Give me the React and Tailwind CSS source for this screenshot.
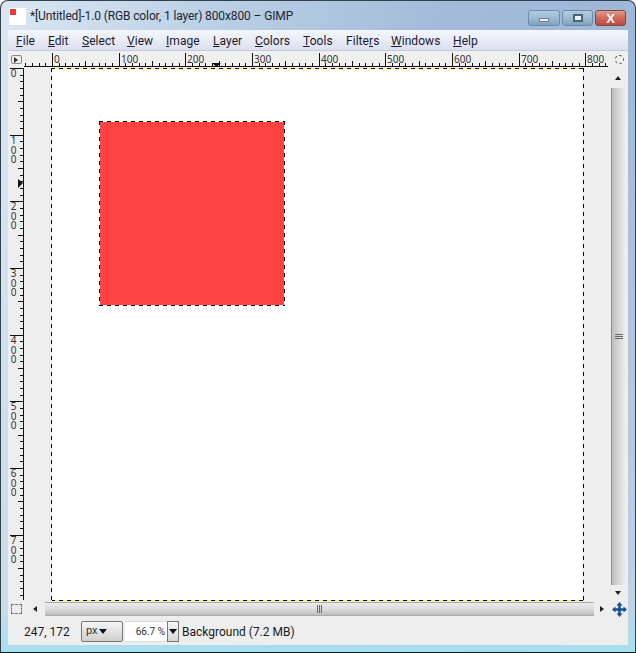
const F = { fontFamily: 'Roboto, "Open Sans", sans-serif' };

function U({ children }) {
  return <span className="underline underline-offset-[1px] decoration-[1px]">{children}</span>;
}

function HRuler() {
  const ticks = [];
  for (let i = -4; i <= 83; i++) {
    const x = Math.round(28 + i * 6.667) + 0.5;
    const h = i % 10 === 0 ? 13 : i % 5 === 0 ? 5 : 3;
    ticks.push(<line key={i} x1={x} x2={x} y1={15 - h} y2={15} stroke="#111" />);
  }
  return (
    <svg width="584" height="17" className="block">
      <rect x="0" y="15" width="584" height="1" fill="#111" />
      {ticks}
      {[0, 100, 200, 300, 400, 500, 600, 700, 800].map((n, i) => (
        <text key={n} x={Math.round(28 + i * 66.67) + 2} y="12" fontSize="10" fill="#333" fontFamily="Noto Sans">{n}</text>
      ))}
      <polygon points="188,12 197,12 192.5,16" fill="#111" />
    </svg>
  );
}

function VRuler() {
  const ticks = [];
  for (let i = 0; i <= 79; i++) {
    const y = Math.round(i * 6.667) + 0.5;
    const h = i % 10 === 0 ? 13 : i % 5 === 0 ? 5 : 3;
    ticks.push(<line key={i} x1={15 - h} x2={15} y1={y} y2={y} stroke="#111" />);
  }
  return (
    <svg width="16" height="532" className="block">
      <rect x="15" y="0" width="1" height="532" fill="#111" />
      {ticks}
      {[0, 100, 200, 300, 400, 500, 600, 700].map((n, i) => {
        const y0 = Math.round(i * 66.67);
        return String(n).split("").map((d, j) => (
          <text key={n + "-" + j} x="5.5" y={y0 + 9 + j * 9.5} textAnchor="middle" fontSize="10" fill="#333" fontFamily="Noto Sans">{d}</text>
        ));
      })}
      <polygon points="10,111 15,115 10,120" fill="#111" />
    </svg>
  );
}

function AntsOverlay({ guide }) {
  const h = guide
    ? "bg-[repeating-linear-gradient(90deg,#000_0_4px,#ffff30_4px_8px)]"
    : "bg-[repeating-linear-gradient(90deg,#000_0_4px,#fff_4px_8px)]";
  const v = guide
    ? "bg-[repeating-linear-gradient(180deg,#000_0_4px,#ffff30_4px_8px)]"
    : "bg-[repeating-linear-gradient(180deg,#000_0_4px,#fff_4px_8px)]";
  return (
    <>
      <div className={"absolute left-0 right-0 top-0 h-px " + h} />
      <div className={"absolute left-0 right-0 bottom-0 h-px " + h} />
      <div className={"absolute left-0 top-0 bottom-0 w-px " + v} />
      <div className={"absolute right-0 top-0 bottom-0 w-px " + v} />
    </>
  );
}

function WinBtn({ w, cls, children }) {
  return (
    <div className={"h-[16px] mt-[9px] flex items-center justify-center rounded-[3px] border " + w + " " + cls}>
      {children}
    </div>
  );
}

function Nav() {
  return (
    <svg width="15" height="15" viewBox="0 0 15 15" className="block">
      <path d="M7.5 0 L10.5 3.5 H8.8 V6.2 H11.5 V4.5 L15 7.5 L11.5 10.5 V8.8 H8.8 V11.5 H10.5 L7.5 15 L4.5 11.5 H6.2 V8.8 H3.5 V10.5 L0 7.5 L3.5 4.5 V6.2 H6.2 V3.5 H4.5 Z" fill="#1c4f94" />
    </svg>
  );
}

function Grip({ vertical }) {
  return (
    <div className={"flex gap-px " + (vertical ? "flex-col" : "flex-row")}>
      {[0, 1, 2].map((i) => (
        <div key={i} className={(vertical ? "w-[8px] h-px" : "h-[8px] w-px") + " bg-[#666]"} />
      ))}
    </div>
  );
}

export default function App() {
  const menu = [
    ["F", "ile", 16], ["E", "dit", 48], ["S", "elect", 82], ["V", "iew", 127], ["I", "mage", 166], ["L", "ayer", 213], ["C", "olors", 255],
    ["T", "ools", 303], ["Filte", "rs", 346, true], ["W", "indows", 391], ["H", "elp", 453],
  ];
  return (
    <div style={F} className="w-[636px] h-[653px] flex flex-col overflow-hidden rounded-t-[8px] border border-[#33424a] border-b-[#0b1c22] bg-[linear-gradient(180deg,transparent_93%,#a8e0ee_100%),linear-gradient(100deg,#dbe7f2_0%,#b9cfe5_30%,#a3bbd9_60%,#9fb8d8_85%,#c1d6e8_100%)] text-[#111]">
      <div className="h-[29px] shrink-0 flex items-center pl-[8px] pr-[9px]">
        <div className="w-[17px] h-[17px] bg-white relative mr-[4px] mt-px">
          <div className="absolute left-[1px] top-[1px] w-[6px] h-[6px] bg-[#f03535]" />
        </div>
        <span className="text-[12px] tracking-[-0.12px] pt-[1px] text-[#1c2530] whitespace-nowrap">*[Untitled]-1.0 (RGB color, 1 layer) 800x800 – GIMP</span>
        <div className="ml-auto flex gap-[2px] self-start">
          <WinBtn w="w-[32px]" cls="border-[#6f8ba3] bg-[linear-gradient(#b4cbe0,#9dbbd3_50%,#7fa3bd)]">
            <div className="w-[10px] h-[4px] bg-[#eef3f7] border border-[#6c7f90] mt-[4px]" />
          </WinBtn>
          <WinBtn w="w-[31px]" cls="border-[#6f8ba3] bg-[linear-gradient(#b4cbe0,#9dbbd3_50%,#7fa3bd)]">
            <div className="w-[10px] h-[8px] bg-[#eef3f7] border-2 border-[#4f6272]" />
          </WinBtn>
          <WinBtn w="w-[31px]" cls="border-[#84473f] bg-[linear-gradient(#dd9d90,#cf6a5c_50%,#bc4a3e)]">
            <span className="text-[13px] leading-none font-bold text-white" style={{ fontFamily: '"Liberation Sans", sans-serif' }}>X</span>
          </WinBtn>
        </div>
      </div>

      <div className="flex-1 min-h-0 mx-[7px] mb-[7px] flex flex-col bg-[#eeeeee]">
        <div className="h-[21px] shrink-0 flex items-center pt-[2px] text-[12px] tracking-[0.05px] bg-[linear-gradient(#f4f6fc,#eceef8_40%,#dcdfef)] border-b border-[#c6cad8]">
          {menu.map(([a, b, x, rev], idx) => {
            const next = idx < menu.length - 1 ? menu[idx + 1][2] : 479;
            return (
              <span key={a} className="whitespace-nowrap text-[#1b1b2b] first:ml-[8px]" style={{ width: next - x }}>
                {rev ? <>{a}<U>{b[0]}</U>{b.slice(1)}</> : <><U>{a}</U>{b}</>}
              </span>
            );
          })}
        </div>

        <div className="h-[17px] shrink-0 flex bg-[#f0f0f0]">
          <div className="w-[16px] flex items-center justify-center">
            <div className="w-[11px] h-[9px] border border-[#888] rounded-[2px] flex items-center justify-center">
              <div className="w-0 h-0 border-y-[3px] border-y-transparent border-l-[4px] border-l-[#333]" />
            </div>
          </div>
          <HRuler />
          <div className="flex-1 flex items-center justify-end pr-[4px]">
            <div className="w-[9px] h-[9px] rounded-full border border-[#555] border-dashed" />
          </div>
        </div>

        <div className="h-[533px] shrink-0 flex">
          <div className="w-[16px] shrink-0"><VRuler /></div>
          <div className="w-[587px] shrink-0 pl-[27px]">
            <div className="relative w-[533px] h-[533px] bg-white pl-[48px] pt-[53px]">
              <AntsOverlay guide />
              <div className="relative w-[186px] h-[185px] bg-[#ff4343]">
                <AntsOverlay />
              </div>
            </div>
          </div>
          <div className="flex-1 flex flex-col items-center pt-[8px] pr-[3px] pb-[6px]">
            <div className="w-0 h-0 border-x-[3px] border-x-transparent border-b-[4px] border-b-[#222] mb-[8px]" />
            <div className="flex-1 w-[14px] border-l border-[#8f8f8f] bg-[linear-gradient(90deg,#bdbdbd,#d6d6d6_50%,#ececec)] flex items-center justify-center">
              <Grip vertical />
            </div>
            <div className="w-0 h-0 border-x-[3px] border-x-transparent border-t-[4px] border-t-[#222] mt-[6px]" />
          </div>
        </div>

        <div className="h-[16px] shrink-0 flex items-center">
          <div className="w-[16px] flex justify-center">
            <div className="w-[11px] h-[10px] border border-dashed border-[#777]" />
          </div>
          <div className="w-[21px] flex justify-center">
            <div className="w-0 h-0 border-y-[3px] border-y-transparent border-r-[4px] border-r-[#222]" />
          </div>
          <div className="w-[549px] h-[14px] border-y border-[#a9a9a9] bg-[linear-gradient(#ececec,#dcdcdc_50%,#bfbfbf)] flex items-center justify-center">
            <Grip />
          </div>
          <div className="w-[16px] flex justify-center">
            <div className="w-0 h-0 border-y-[3px] border-y-transparent border-l-[4px] border-l-[#222]" />
          </div>
          <div className="flex-1 flex justify-center"><Nav /></div>
        </div>

        <div className="flex-1 min-h-0 flex items-center pt-[1px] text-[12px] text-[#1a1a1a]">
          <span className="ml-[16px] w-[57px] whitespace-nowrap">247, 172</span>
          <div className="w-[42px] h-[21px] border border-[#777] bg-[linear-gradient(#f6f6f6,#e2e2e2_50%,#cfcfcf)] rounded-[2px] flex items-center pl-[4px] gap-[1px] text-[11px] text-[#333]">
            px<div className="w-0 h-0 border-x-[4px] border-x-transparent border-t-[5px] border-t-[#111]" />
          </div>
          <div className="ml-[2px] w-[42px] h-[21px] bg-white border-y border-[#dcdcdc] flex items-center justify-end pr-[2px] text-[10px] text-[#333]">66.7 %</div>
          <div className="w-[12px] h-[21px] border border-[#777] bg-[linear-gradient(#f6f6f6,#d8d8d8)] flex items-center justify-center">
            <div className="w-0 h-0 border-x-[4px] border-x-transparent border-t-[5px] border-t-[#111]" />
          </div>
          <span className="ml-[3px] whitespace-nowrap">Background (7.2 MB)</span>
        </div>
      </div>
    </div>
  );
}
